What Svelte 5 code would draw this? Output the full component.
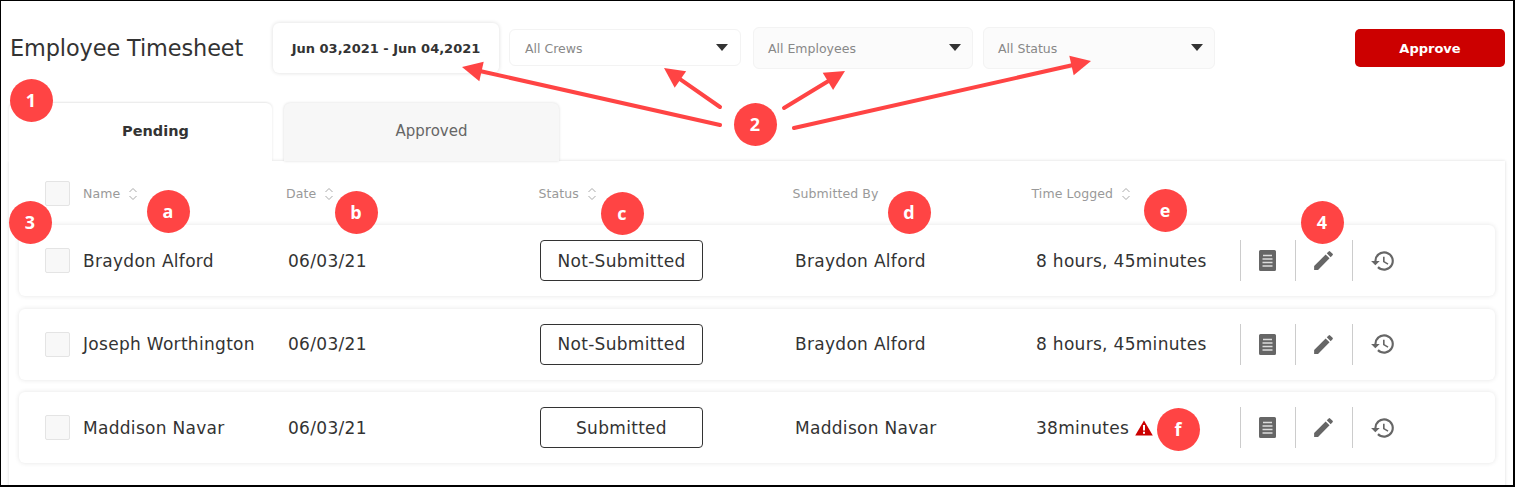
<script>
  const sorter = [true, true, true, false, true];
  const heads = ['Name', 'Date', 'Status', 'Submitted By', 'Time Logged'];
  const rows = [
    { name: 'Braydon Alford', date: '06/03/21', status: 'Not-Submitted', by: 'Braydon Alford', time: '8 hours, 45minutes' },
    { name: 'Joseph Worthington', date: '06/03/21', status: 'Not-Submitted', by: 'Braydon Alford', time: '8 hours, 45minutes' },
    { name: 'Maddison Navar', date: '06/03/21', status: 'Submitted', by: 'Maddison Navar', time: '38minutes', warn: true }
  ];
  const badges = [
    ['1', 31, 100], ['2', 755, 124], ['3', 30, 222], ['a', 168, 211], ['b', 356, 212],
    ['c', 622, 213], ['d', 909, 212], ['e', 1165, 210], ['4', 1322, 222], ['f', 1178, 429]
  ];
  const arrows = [
    [720, 125, 462, 67], [720, 107, 664, 68], [784, 108, 845, 71], [794, 128, 1091, 61]
  ];
  // arrow head polygon, pointing from the start of the line to its tip
  function head(a) {
    const [x1, y1, x2, y2] = a;
    const l = Math.hypot(x2 - x1, y2 - y1);
    const ux = (x2 - x1) / l, uy = (y2 - y1) / l;
    const bx = x2 - ux * 20, by = y2 - uy * 20;
    return `${x2},${y2} ${bx - uy * 10},${by + ux * 10} ${bx + uy * 10},${by - ux * 10}`;
  }
  function shaft(a) {
    const [x1, y1, x2, y2] = a;
    const l = Math.hypot(x2 - x1, y2 - y1);
    return { x2: x2 - (x2 - x1) / l * 16, y2: y2 - (y2 - y1) / l * 16 };
  }
</script>

<div class="page">
  <header class="top">
    <h1>Employee Timesheet</h1>
    <div class="range">Jun 03,2021 - Jun 04,2021</div>
    <div class="select crews">All Crews<i></i></div>
    <div class="select emp">All Employees<i></i></div>
    <div class="select stat">All Status<i></i></div>
    <button class="approve">Approve</button>
  </header>

  <div class="tabs">
    <div class="tab active">Pending</div>
    <div class="tab">Approved</div>
  </div>

  <div class="panel">
    <div class="heads">
      <span class="check"></span>
      {#each heads as h, i}
        <span class="head">{h}
          {#if sorter[i]}
            <svg width="10" height="16" viewBox="0 0 10 16" fill="none" stroke="#aaa" stroke-width="1"><path d="M1.5 6 5 2.5 8.5 6M1.5 10 5 13.5 8.5 10" /></svg>
          {/if}
        </span>
      {/each}
    </div>

    {#each rows as r}
      <div class="row">
        <span class="check"></span>
        <span>{r.name}</span>
        <span>{r.date}</span>
        <span><span class="pill">{r.status}</span></span>
        <span>{r.by}</span>
        <span class="time">{r.time}
          {#if r.warn}
            <svg width="18" height="16" viewBox="0 0 18 16"><path d="M9 .5 17.8 15.5H.2Z" fill="#cc0000" /><path d="M8 5h2v5.5H8zM8 11.8h2v2H8z" fill="#fff" /></svg>
          {/if}
        </span>
        <div class="actions">
          <span class="act a1">
            <svg width="17" height="21" viewBox="0 0 17 21"><path d="M1.5 0H15.5A1.5 1.5 0 0 1 17 1.5V19.5A1.5 1.5 0 0 1 15.5 21H1.5A1.5 1.5 0 0 1 0 19.5V1.5A1.5 1.5 0 0 1 1.5 0Z" fill="#666" /><path d="M4 5.5h9M3.5 9h10M3.5 12.5h10M3.5 16h10" stroke="#ddd" stroke-width="1.3" /></svg>
          </span>
          <span class="act a2">
            <svg width="25" height="25" viewBox="0 0 24 24" fill="#666"><path d="M3 17.25V21h3.75L17.81 9.94l-3.75-3.75L3 17.25zM20.71 7.04a1 1 0 0 0 0-1.41l-2.34-2.34a1 1 0 0 0-1.41 0l-1.83 1.83 3.75 3.75 1.83-1.83z" /></svg>
          </span>
          <span class="act a3">
            <svg width="26" height="26" viewBox="0 0 24 24" fill="#666"><path d="M13 3a9 9 0 0 0-9 9H1l3.89 3.89.07.14L9 12H6a7 7 0 1 1 2.05 4.95l-1.42 1.42A9 9 0 1 0 13 3zm-1 5v5l4.28 2.54.72-1.21-3.5-2.08V8H12z" /></svg>
          </span>
        </div>
      </div>
    {/each}
  </div>

  <svg class="arrows" width="1515" height="487" viewBox="0 0 1515 487">
    {#each arrows as a}
      <line x1={a[0]} y1={a[1]} x2={shaft(a).x2} y2={shaft(a).y2} stroke="#ff4444" stroke-width="4" stroke-linecap="round" />
      <polygon points={head(a)} fill="#ff4444" />
    {/each}
  </svg>
  {#each badges as b}
    <span class="badge" style="left: {b[1] - 21.5}px; top: {b[2] - 21.5}px">{b[0]}</span>
  {/each}
</div>

<style>
  :global(body) { margin: 0; background: #fff; }
  .page {
    position: relative;
    box-sizing: border-box;
    width: 1515px;
    height: 487px;
    overflow: hidden;
    border: 1px solid #000;
    border-width: 1px 2px 2px 1px;
    font-family: "DejaVu Sans", sans-serif;
    color: #333;
  }
  .top { display: flex; align-items: center; height: 100px; margin-top: -4px; padding-left: 9px; }
  h1 { margin: 2px 0 0; width: 263px; font-size: 22.4px; font-weight: 400; color: #333; white-space: nowrap; letter-spacing: -0.1px; }
  .range {
    display: flex; align-items: center; justify-content: center;
    width: 226px; height: 50px; margin-top: 2px;
    background: #fff; border-radius: 6px; box-shadow: 0 0 4px rgba(0,0,0,.14);
    font-size: 13px; font-weight: 700;
    color: #333;
  }
  .select {
    position: relative; box-sizing: border-box;
    display: flex; align-items: center;
    padding: 2px 0 0 15px; margin-top: 1px;
    border: 1px solid #f3f3f3; border-radius: 6px;
    font-size: 12.5px; color: #888;
  }
  .select i {
    position: absolute; right: 11px; top: 50%; margin-top: -4px;
    border: 6px solid transparent; border-bottom: 0; border-top: 7px solid #333;
  }
  .crews { width: 232px; height: 37px; margin-left: 10px; background: #fff; }
  .crews i { right: 12px; }
  .emp { width: 220px; height: 42px; margin-left: 12px; padding-left: 14px; background: #fbfbfb; }
  .stat { width: 232px; height: 42px; margin-left: 10px; padding-left: 14px; background: #fbfbfb; }
  .approve {
    width: 150px; height: 38px; margin-left: 140px; margin-top: 2px;
    background: #cc0000; color: #fff; border: 0; border-radius: 5px;
    font-family: inherit; font-size: 13px; font-weight: 700;
  }
  .tabs { display: flex; gap: 12px; padding-left: 8px; height: 58px; margin-top: 6px; }
  .tab {
    display: flex; align-items: center; justify-content: center;
    width: 275px; height: 58px; box-sizing: border-box; padding: 0 0 3px 20px;
    background: #f7f7f7; color: #666; font-size: 15px;
    border-radius: 6px 6px 0 0; box-shadow: 0 0 3px rgba(0,0,0,.15);
  }
  .tab.active {
    position: relative; width: 263px; padding-left: 30px; background: #fff; color: #333;
    font-size: 14.5px; font-weight: 700; box-shadow: -1px -1px 2px rgba(0,0,0,.05), 1px -1px 2px rgba(0,0,0,.05);
  }
  .panel {
    box-sizing: border-box; width: 1496px; height: 340px; margin-left: 8px;
    padding: 0 10px; background: #fff; box-shadow: 0 0 3px rgba(0,0,0,.15);
  }
  .heads {
    display: grid; align-items: center;
    grid-template-columns: 38px 203px 252.5px 254px 239px auto;
    height: 64px; padding: 0 0 0 26px; font-size: 12.5px; color: #999;
  }
  .head { display: flex; align-items: center; gap: 8px; margin-top: 1px; color: #999; letter-spacing: 0.1px; }
  .row {
    display: grid; align-items: center;
    grid-template-columns: 38px 205px 252px 255px 241px 204px auto;
    height: 71px; margin-bottom: 12.5px; padding-left: 26px;
    background: #fff; border-radius: 6px;
    box-shadow: 0 0 5px rgba(0,0,0,.11);
    font-size: 17px; letter-spacing: 0.3px; color: #333;
  }
  .check {
    box-sizing: border-box; display: block; width: 25px; height: 25px;
    background: #f8f8f8; border: 1px solid #e4e4e4; border-radius: 2px;
  }
  .pill {
    display: flex; align-items: center; justify-content: center; box-sizing: border-box;
    width: 163px; height: 41px; border: 1px solid #333; border-radius: 4px; background: #fff;
  }
  .time { display: flex; align-items: center; gap: 6px; }
  .actions { display: flex; height: 41px; }
  .act {
    display: flex; align-items: center; justify-content: center; box-sizing: border-box;
    height: 41px; border-left: 1px solid #ccc;
  }
  .a1 { width: 55px; padding-right: 2px; }
  .a2 { width: 57px; padding-right: 2px; }
  .a3 { width: 60px; }
  .arrows { position: absolute; left: -1px; top: -1px; pointer-events: none; }
  .badge {
    position: absolute; margin: -1px 0 0 -1px;
    display: flex; align-items: center; justify-content: center;
    width: 43px; height: 43px; border-radius: 50%;
    background: #ff4444; color: #fff; font-family: "Open Sans", sans-serif; font-size: 18px; font-weight: 700;
  }
</style>
